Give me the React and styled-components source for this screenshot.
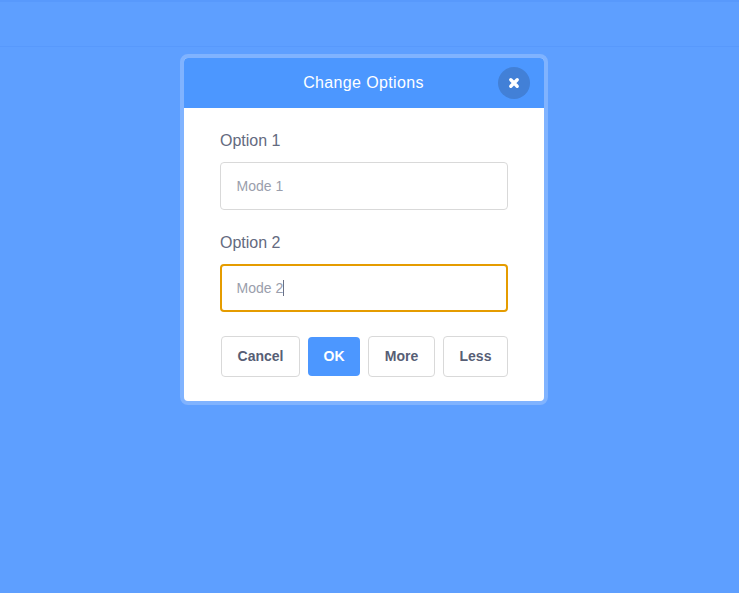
import React from "react";
import styled, { createGlobalStyle } from "styled-components";

const GlobalStyle = createGlobalStyle`
  html, body {
    margin: 0;
    height: 100%;
  }
  body {
    font-family: "Liberation Sans", Arial, sans-serif;
    background-color: #5e9fff;
  }
`;

const Page = styled.div`
  width: 739px;
  height: 593px;
  background-color: #5e9fff;
  overflow: hidden;
`;

const TopBar = styled.div`
  height: 44px;
  border-top: 2px solid #5899fc;
  border-bottom: 1px solid #5899fc;
  background-color: #5e9fff;
`;

const Frame = styled.div`
  width: 360px;
  margin: 7px 0 0 180px;
  border: 4px solid #80b3ff;
  border-radius: 8px;
  background-color: #ffffff;
  overflow: hidden;
`;

const Header = styled.div`
  position: relative;
  height: 50px;
  display: flex;
  align-items: center;
  justify-content: center;
  background-color: #4c97ff;
  color: #ffffff;
  font-size: 16px;
  letter-spacing: 0.35px;
  padding-right: 1px;
`;

const CloseButton = styled.button`
  position: absolute;
  top: 9px;
  right: 14px;
  width: 32px;
  height: 32px;
  padding: 0;
  border: none;
  border-radius: 50%;
  display: flex;
  align-items: center;
  justify-content: center;
  background-color: #4280d7;
`;

const Body = styled.div`
  padding: 23px 36px 24px;
`;

const Group = styled.div`
  margin-bottom: 23px;
`;

const Label = styled.div`
  height: 20px;
  line-height: 20px;
  margin-bottom: 11px;
  font-size: 16px;
  color: #646a80;
`;

const Field = styled.div`
  box-sizing: border-box;
  height: 48px;
  display: flex;
  align-items: center;
  border-radius: 4px;
  border: ${props => (props.$focused ? "2px solid #e59c00" : "1px solid #d9d9d9")};
  padding-left: ${props => (props.$focused ? "14.5px" : "15.5px")};
  font-size: 14px;
  color: #9a9eac;
`;

const Caret = styled.span`
  width: 1px;
  height: 16px;
  background-color: #6b7186;
`;

const Buttons = styled.div`
  margin-top: 24px;
  display: flex;
  justify-content: flex-end;
  align-items: center;
  gap: 8px;
`;

const Button = styled.button`
  box-sizing: border-box;
  width: ${props => props.$width}px;
  height: ${props => (props.$primary ? "39px" : "41px")};
  padding: 0 0 1px;
  border-radius: 4px;
  border: ${props => (props.$primary ? "none" : "1px solid #d9d9d9")};
  background-color: ${props => (props.$primary ? "#4c97ff" : "#ffffff")};
  color: ${props => (props.$primary ? "#ffffff" : "#575e75")};
  font-family: inherit;
  font-size: 14px;
  font-weight: bold;
`;

function CloseIcon() {
  return (
    <svg width="12" height="12" viewBox="0 0 12 12">
      <path d="M2.8 2.8 L9.2 9.2 M9.2 2.8 L2.8 9.2" stroke="#ffffff" strokeWidth="3.4" strokeLinecap="round" />
    </svg>
  );
}

export default function App() {
  return (
    <Page>
      <GlobalStyle />
      <TopBar />
      <Frame>
        <Header>
          Change Options
          <CloseButton aria-label="Close">
            <CloseIcon />
          </CloseButton>
        </Header>
        <Body>
          <Group>
            <Label>Option 1</Label>
            <Field>Mode 1</Field>
          </Group>
          <Label>Option 2</Label>
          <Field $focused>
            Mode 2
            <Caret />
          </Field>
          <Buttons>
            <Button $width={79}>Cancel</Button>
            <Button $width={52} $primary>OK</Button>
            <Button $width={67}>More</Button>
            <Button $width={65}>Less</Button>
          </Buttons>
        </Body>
      </Frame>
    </Page>
  );
}
